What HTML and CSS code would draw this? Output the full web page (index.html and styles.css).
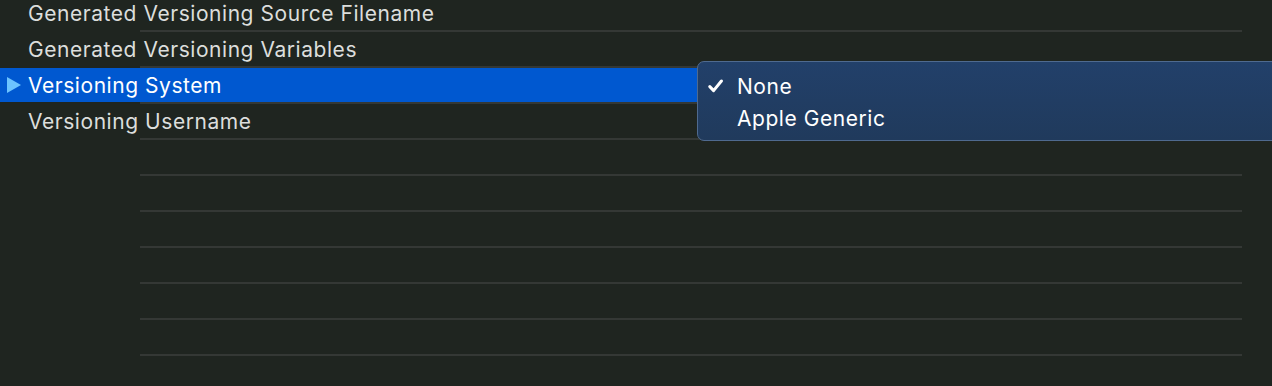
FILE: index.html
```html
<!DOCTYPE html>
<html lang="en">
<head>
  <meta charset="UTF-8">
  <title>Build Settings</title>
  <link rel="stylesheet" href="styles.css">
</head>
<body>

  <div class="settings">
    <div class="row">
      <div class="label">Generated Versioning Source Filename</div>
      <div class="line"></div>
    </div>
    <div class="row">
      <div class="label">Generated Versioning Variables</div>
      <div class="line"></div>
    </div>
    <div class="row selected">
      <div class="label"><span class="disclosure"></span>Versioning System</div>
      <div class="line"></div>
    </div>
    <div class="row">
      <div class="label">Versioning Username</div>
      <div class="line"></div>
    </div>
    <div class="row"><div class="label"></div><div class="line"></div></div>
    <div class="row"><div class="label"></div><div class="line"></div></div>
    <div class="row"><div class="label"></div><div class="line"></div></div>
    <div class="row"><div class="label"></div><div class="line"></div></div>
    <div class="row"><div class="label"></div><div class="line"></div></div>
    <div class="row"><div class="label"></div><div class="line"></div></div>
    <div class="row"><div class="label"></div><div class="line"></div></div>
  </div>

  <!-- popup menu for the selected setting -->
  <div class="popup">
    <div class="item">
      <svg class="check" width="15" height="14" viewBox="0 0 15 14">
        <path d="M1.8 7.6 L5.6 11.6 L13.4 2" fill="none" stroke="#ffffff" stroke-width="3" stroke-linecap="round" stroke-linejoin="round"/>
      </svg>
      <span>None</span>
    </div>
    <div class="item">
      <span class="check"></span>
      <span>Apple Generic</span>
    </div>
  </div>

</body>
</html>
```

FILE: styles.css
```css
body {
    margin: 0;
    background-color: #1f2520;
    font-family: Inter, "Noto Sans", sans-serif;
    color: #dcdedc;
    overflow: hidden;
    height: 386px;
}

.settings {
    margin-top: -4px;
}

.row {
    display: flex;
    flex-direction: column;
}

.label {
    height: 34px;
    display: flex;
    align-items: center;
    padding-left: 28px;
    font-size: 21px;
    letter-spacing: 0.55px;
    position: relative;
}

.line {
    height: 2px;
    margin: 0 30px 0 140px;
    background-color: #343835;
}

.selected .label {
    background-color: #0058d0;
    color: #ffffff;
}

.disclosure {
    position: absolute;
    left: 7px;
    top: 9px;
    width: 0;
    height: 0;
    border-top: 8px solid transparent;
    border-bottom: 8px solid transparent;
    border-left: 14px solid #6cc4ff;
}

.popup {
    position: absolute;
    left: 697px;
    top: 61px;
    width: 620px;
    box-sizing: border-box;
    height: 80px;
    padding-top: 8px;
    background: linear-gradient(#22406a, #203a5c);
    border: 1px solid #4f6a8f;
    border-radius: 7px;
}

.item {
    height: 32px;
    display: flex;
    align-items: center;
    color: #ffffff;
    font-size: 21px;
    letter-spacing: 0.55px;
}

.check {
    width: 15px;
    margin: 0 14px 0 10px;
}
```
